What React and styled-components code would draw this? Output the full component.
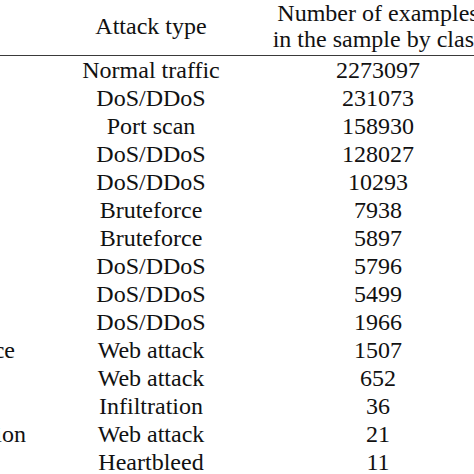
import styled, { createGlobalStyle } from 'styled-components';

const GlobalStyle = createGlobalStyle`
  html, body {
    margin: 0;
    padding: 0;
    background: #ffffff;
  }
  body {
    width: 474px;
    height: 474px;
    overflow: hidden;
    font-family: "Liberation Serif", "Times New Roman", serif;
  }
`;

const rows = [
  { name: 'BENIGN', type: 'Normal traffic', count: 2273097 },
  { name: 'DoS Hulk', type: 'DoS/DDoS', count: 231073 },
  { name: 'PortScan', type: 'Port scan', count: 158930 },
  { name: 'DDoS', type: 'DoS/DDoS', count: 128027 },
  { name: 'DoS GoldenEye', type: 'DoS/DDoS', count: 10293 },
  { name: 'FTP-Patator', type: 'Bruteforce', count: 7938 },
  { name: 'SSH-Patator', type: 'Bruteforce', count: 5897 },
  { name: 'DoS slowloris', type: 'DoS/DDoS', count: 5796 },
  { name: 'DoS Slowhttptest', type: 'DoS/DDoS', count: 5499 },
  { name: 'Bot', type: 'DoS/DDoS', count: 1966 },
  { name: 'Web Attack – Brute Force', type: 'Web attack', count: 1507 },
  { name: 'Web Attack – XSS', type: 'Web attack', count: 652 },
  { name: 'Infiltration', type: 'Infiltration', count: 36 },
  { name: 'Web Attack – SQL Injection', type: 'Web attack', count: 21 },
  { name: 'Heartbleed', type: 'Heartbleed', count: 11 },
];

// the screenshot is a crop of a wider table, so the first column sits off the left edge
const Frame = styled.div`
  width: 474px;
  height: 474px;
  overflow: hidden;
  background: #ffffff;
`;

const Table = styled.table`
  margin-left: -250px;
  border-collapse: collapse;
  table-layout: fixed;
  width: 734px;
`;

const Head = styled.th`
  font-family: "Liberation Serif", "Times New Roman", serif;
  font-size: 24px;
  font-weight: normal;
  color: #111111;
  text-align: center;
  white-space: nowrap;
  vertical-align: middle;
  line-height: 26px;
  padding: 0 0 3px;
  border-bottom: 1.5px solid #3a3a3a;
`;

const Cell = styled.td`
  font-family: "Liberation Serif", "Times New Roman", serif;
  font-size: 24px;
  color: #111111;
  text-align: center;
  white-space: nowrap;
  line-height: 28px;
  padding: 0;
`;

export default function App() {
  return (
    <Frame>
      <GlobalStyle />
      <Table>
        <colgroup>
          <col style={{ width: 280 }} />
          <col style={{ width: 242 }} />
          <col style={{ width: 212 }} />
        </colgroup>
        <thead>
          <tr>
            <Head>Class name</Head>
            <Head>Attack type</Head>
            <Head>
              Number of examples
              <br />
              in the sample by class
            </Head>
          </tr>
        </thead>
        <tbody>
          {rows.map(r => (
            <tr key={r.name}>
              <Cell>{r.name}</Cell>
              <Cell>{r.type}</Cell>
              <Cell>{r.count}</Cell>
            </tr>
          ))}
        </tbody>
      </Table>
    </Frame>
  );
}
